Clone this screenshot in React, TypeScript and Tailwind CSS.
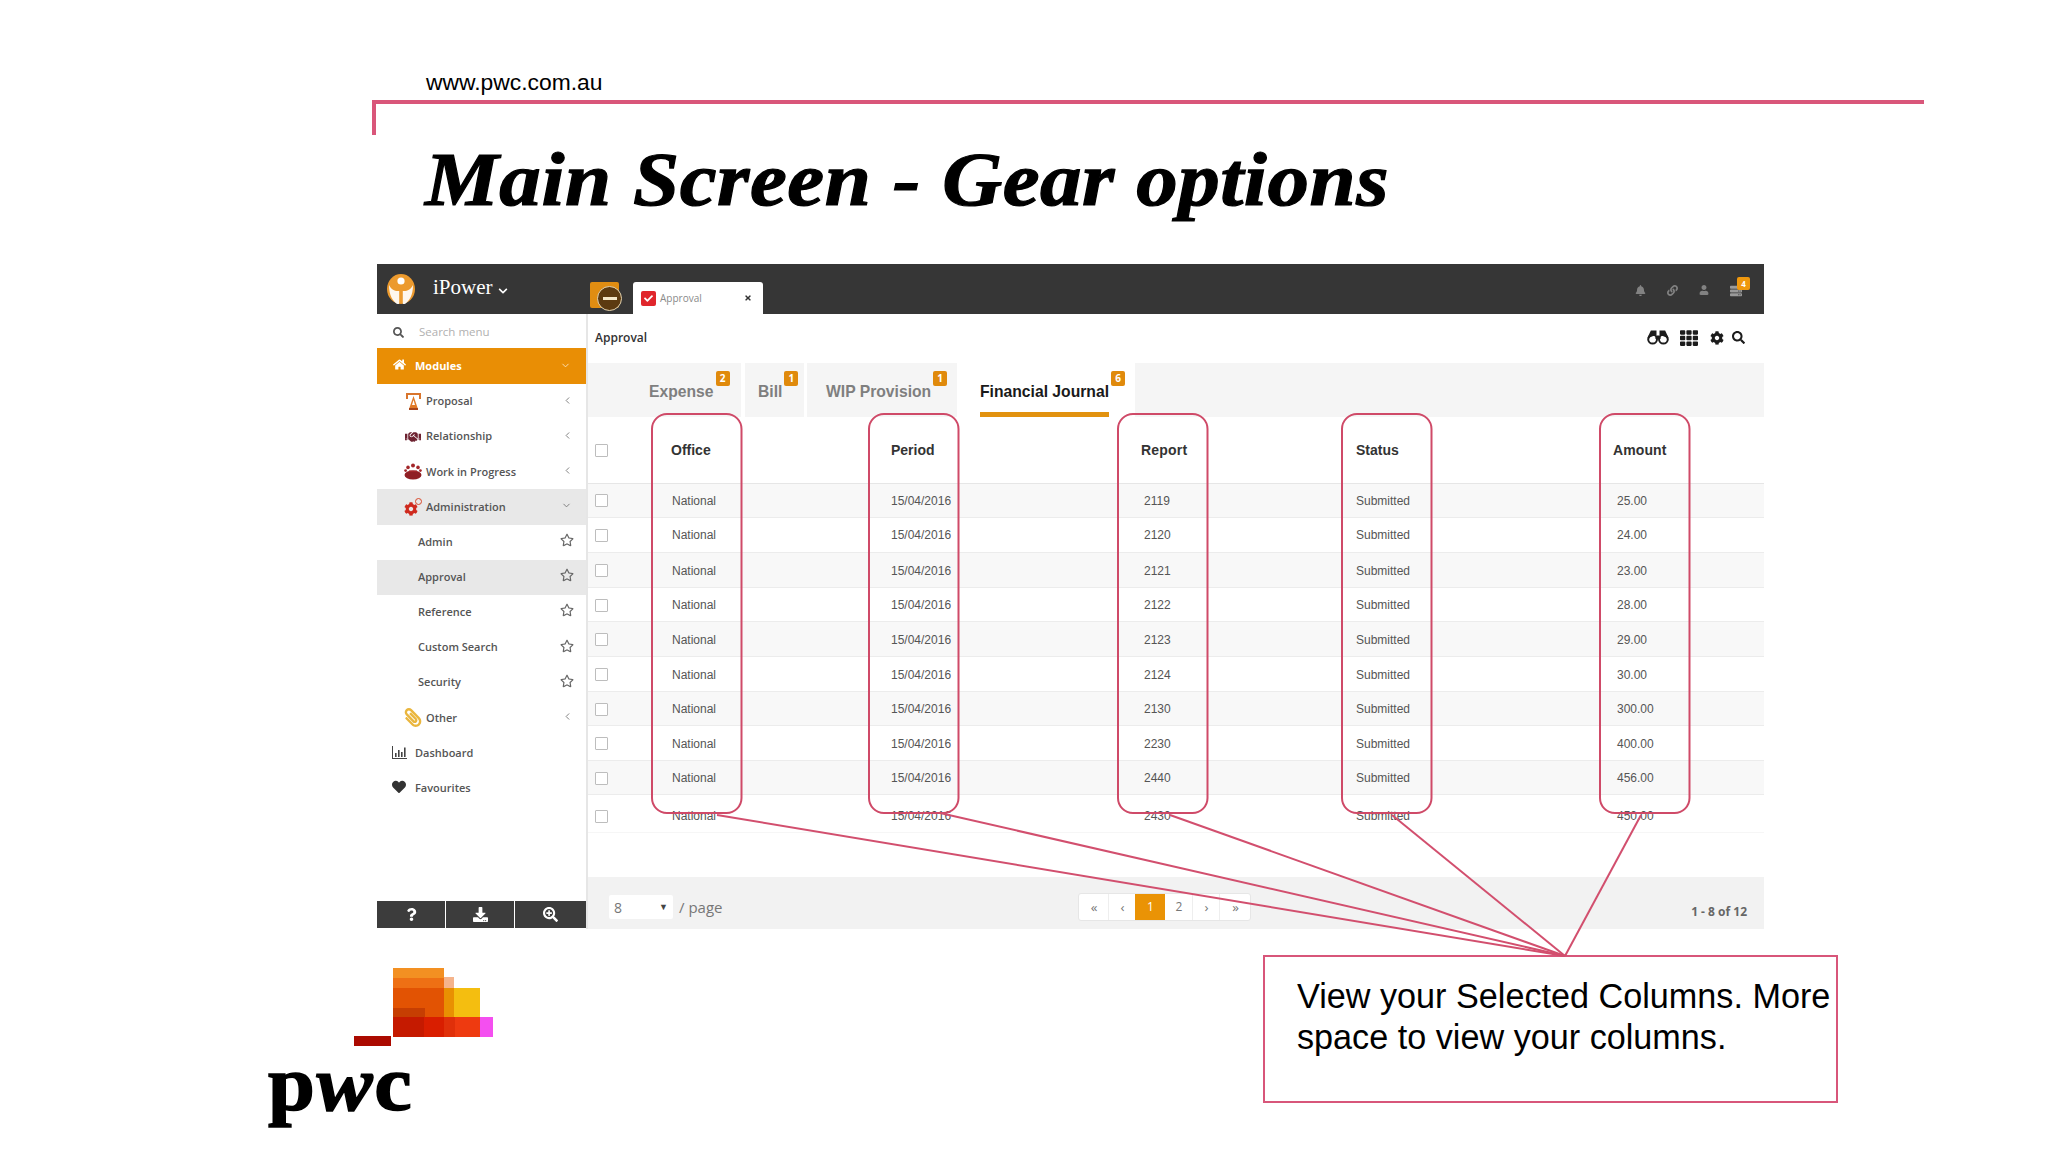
import React from "react";
import {
  FaHome, FaSearch, FaHeart, FaQuestion, FaDownload, FaSearchPlus, FaBell, FaLink, FaUser,
  FaTh, FaCog, FaCheck, FaTimes, FaRegStar, FaPaperclip,
  FaHandshake, FaServer, FaChevronDown,
} from "react-icons/fa";
import { FiChevronLeft, FiChevronDown } from "react-icons/fi";

const rows = [
  { h: "h-[34px]", bg: "bg-[#f8f8f8] border-[#ececec]", r: "2119", a: "25.00" },
  { h: "h-[35px]", bg: "bg-white border-[#ececec]", r: "2120", a: "24.00" },
  { h: "h-[35px] pt-[1px]", bg: "bg-[#f8f8f8] border-[#ececec]", r: "2121", a: "23.00" },
  { h: "h-[34px] pt-[1px]", bg: "bg-white border-[#ececec]", r: "2122", a: "28.00" },
  { h: "h-[35px] pt-[1px]", bg: "bg-[#f8f8f8] border-[#ececec]", r: "2123", a: "29.00" },
  { h: "h-[35px] pt-[1px]", bg: "bg-white border-[#ececec]", r: "2124", a: "30.00" },
  { h: "h-[34px] pt-[1px]", bg: "bg-[#f8f8f8] border-[#ececec]", r: "2130", a: "300.00" },
  { h: "h-[35px] pt-[1px]", bg: "bg-white border-[#ececec]", r: "2230", a: "400.00" },
  { h: "h-[34px] pt-[1px]", bg: "bg-[#f8f8f8] border-[#ececec]", r: "2440", a: "456.00" },
  { h: "h-[38px] pt-[5px]", bg: "bg-white border-[#f6f6f6]", r: "2430", a: "450.00" },
];

const gridCols = "grid grid-cols-[83px_220px_249px_216px_257px_151px] items-center";

function Check() {
  return <span className="block w-[13px] h-[13px] ml-[7px] border border-[#bdbdbd] bg-white rounded-[1px]" />;
}

function Badge({ n }: { n: string }) {
  return (
    <span className="mt-[8px] ml-[2px] w-[14px] h-[15px] rounded-[2px] bg-[#e08a0c] text-white text-[10px] leading-[15px] text-center font-['Open_Sans'] font-bold">
      {n}
    </span>
  );
}

function ProposalIcon() {
  return (
    <svg width="15" height="17" viewBox="0 0 15 17">
      <path d="M0 0h15v6h-2V2H2v4H0z" fill="#d9752c" />
      <path d="M7.5 3 L12 16 H3 Z" fill="#e27a26" />
      <path d="M7.5 7 L9 12 H6 Z" fill="#fff" />
      <rect x="3" y="15" width="9" height="2" fill="#a8441a" />
    </svg>
  );
}

function WorkIcon() {
  return (
    <svg width="18" height="17" viewBox="0 0 18 17">
      <ellipse cx="9" cy="12" rx="8.5" ry="4.6" fill="#8f1f24" />
      <circle cx="9" cy="2.6" r="2" fill="#a3262a" />
      <circle cx="4" cy="4.4" r="1.8" fill="#a3262a" />
      <circle cx="14" cy="4.4" r="1.8" fill="#a3262a" />
      <circle cx="1.6" cy="7.6" r="1.4" fill="#a3262a" />
      <circle cx="16.4" cy="7.6" r="1.4" fill="#a3262a" />
      <path d="M5 7.5h8v1.5H5z" fill="#a3262a" />
    </svg>
  );
}

function AdminIcon() {
  return (
    <span className="relative flex w-[18px] h-[18px] items-end">
      <FaCog className="text-[#cf2a1e] text-[14px]" />
      <span className="absolute right-[0px] top-[0px] w-[7px] h-[7px] rounded-full border-[1.5px] border-[#d8482a]" />
    </span>
  );
}

function BarsIcon() {
  return (
    <svg width="15" height="13" viewBox="0 0 15 13" fill="#444">
      <rect x="0" y="0" width="1" height="13" />
      <rect x="0" y="12" width="15" height="1" />
      <rect x="3" y="7" width="1.6" height="4" />
      <rect x="6" y="4" width="1.6" height="7" />
      <rect x="9" y="6" width="1.6" height="5" />
      <rect x="12" y="1.5" width="1.6" height="9.5" />
    </svg>
  );
}

function BinocularsIcon() {
  return (
    <svg width="22" height="15" viewBox="0 0 22 15" fill="none">
      <circle cx="5.6" cy="9.2" r="4.4" stroke="#1c1c1c" strokeWidth="2" />
      <circle cx="16.4" cy="9.2" r="4.4" stroke="#1c1c1c" strokeWidth="2" />
      <path d="M1.5 8 L4.5 1.5 H8.5 V5 M20.5 8 L17.5 1.5 H13.5 V5" stroke="#1c1c1c" strokeWidth="2" fill="#1c1c1c" />
      <rect x="8.5" y="5.5" width="5" height="3.5" fill="#1c1c1c" />
    </svg>
  );
}

function LogoMark() {
  return (
    <svg width="28" height="30" viewBox="0 0 28 30">
      <ellipse cx="14" cy="15" rx="14" ry="15" fill="#ec9a2e" />
      <circle cx="14" cy="7" r="3.6" fill="#fff" />
      <path d="M2 11 C5 17 9 17 12.2 17 V30 H10 C6 27 2 22 2 11Z" fill="#fff" opacity="0.92" />
      <path d="M26 11 C23 17 19 17 15.8 17 V30 H18 C22 27 26 22 26 11Z" fill="#fff" opacity="0.92" />
      <path d="M5 12 C8 15 11 15 14 15 C17 15 20 15 23 12" stroke="#ec9a2e" strokeWidth="2" fill="none" />
    </svg>
  );
}

type Item = {
  label: string;
  kind: "top" | "sub" | "child";
  icon?: React.ReactNode;
  right?: "left" | "down" | "star";
  active?: boolean;
};

const menu: Item[] = [
  { label: "Proposal", kind: "sub", icon: <ProposalIcon />, right: "left" },
  { label: "Relationship", kind: "sub", icon: <FaHandshake className="text-[#6d2230] text-[16px]" />, right: "left" },
  { label: "Work in Progress", kind: "sub", icon: <WorkIcon />, right: "left" },
  { label: "Administration", kind: "sub", icon: <AdminIcon />, right: "down", active: true },
  { label: "Admin", kind: "child", right: "star" },
  { label: "Approval", kind: "child", right: "star", active: true },
  { label: "Reference", kind: "child", right: "star" },
  { label: "Custom Search", kind: "child", right: "star" },
  { label: "Security", kind: "child", right: "star" },
  { label: "Other", kind: "sub", icon: <FaPaperclip className="text-[#eab63e] text-[19px] -scale-x-100" />, right: "left" },
  { label: "Dashboard", kind: "top", icon: <BarsIcon /> },
  { label: "Favourites", kind: "top", icon: <FaHeart className="text-[#333] text-[14px] -mt-[3px]" /> },
];

function MenuRow({ item }: { item: Item }) {
  return (
    <div className={`flex items-center h-[35.15px] text-[11px] font-semibold text-[#555] ${item.active ? "bg-[#e8e8e8]" : ""}`}>
      {item.kind === "top" && <span className="ml-[13px] w-[18px] mr-[7px] flex justify-center">{item.icon}</span>}
      {item.kind === "sub" && <span className="ml-[27px] w-[18px] mr-[4px] flex justify-center">{item.icon}</span>}
      {item.kind === "child" && <span className="ml-[41px]" />}
      <span>{item.label}</span>
      {item.right === "left" && <FiChevronLeft className="ml-auto mr-[13px] -mt-[3px] text-[11px] text-[#777]" />}
      {item.right === "down" && <FiChevronDown className="ml-auto mr-[14px] -mt-[3px] text-[11px] text-[#777]" />}
      {item.right === "star" && <FaRegStar className="ml-auto mr-[12px] -mt-[4px] text-[14px] text-[#666]" />}
    </div>
  );
}

function Sidebar() {
  return (
    <aside className="w-[211px] h-full flex flex-col border-r-2 border-[#e6e6e6] font-['Open_Sans']">
      <div className="h-[34px] pt-[2px] flex items-center">
        <FaSearch className="ml-[16px] text-[11px] text-[#555]" />
        <span className="ml-[15px] text-[11.5px] text-[#b0b0b0]">Search menu</span>
      </div>
      <div className="h-[36px] pt-[1px] flex items-center bg-[#e98e05] text-white text-[11px] font-bold">
        <span className="ml-[13px] w-[18px] mr-[7px] flex justify-center"><FaHome className="text-[13px] -mt-[4px]" /></span>
        <span>Modules</span>
        <FiChevronDown className="ml-auto mr-[15px] text-[11px] -mt-[2px] text-[#fbe3bf]" />
      </div>
      {menu.map((m) => <MenuRow key={m.label} item={m} />)}
      <div className="mt-auto mb-[1px] h-[27px] flex gap-px text-white">
        <span className="w-[68px] bg-[#3c3c3c] flex items-center justify-center"><FaQuestion className="text-[13px]" /></span>
        <span className="w-[68px] bg-[#3c3c3c] flex items-center justify-center"><FaDownload className="text-[15px]" /></span>
        <span className="w-[71px] bg-[#3c3c3c] flex items-center justify-center"><FaSearchPlus className="text-[15px]" /></span>
      </div>
    </aside>
  );
}

function TopBar() {
  return (
    <header className="h-[50px] bg-[#363636] flex items-center shrink-0">
      <div className="w-[213px] flex items-center">
        <span className="ml-[10px] flex"><LogoMark /></span>
        <span className="ml-[18px] -mt-[2px] text-white text-[21px] font-['Liberation_Serif']">iPower</span>
        <FaChevronDown className="ml-[5px] mt-[4px] text-white text-[10px]" />
      </div>
      <div className="self-start mt-[18px] w-[29px] h-[26px] bg-[#e08d12] rounded-[2px] relative">
        <span className="absolute left-[7px] top-[4px] w-[25px] h-[25px] rounded-full bg-[#5c3a10] border border-[#e3d3b0] flex items-center justify-center">
          <span className="w-[14px] h-[3px] bg-[#f3e6c8]" />
        </span>
      </div>
      <div className="self-end ml-[14px] w-[130px] h-[32px] bg-white rounded-t-[3px] flex items-center font-['Open_Sans']">
        <span className="ml-[8px] w-[15px] h-[15px] rounded-[2px] bg-[#e0262c] flex items-center justify-center">
          <FaCheck className="text-white text-[9px]" />
        </span>
        <span className="ml-[4px] text-[10px] text-[#8a8a8a]">Approval</span>
        <FaTimes className="ml-auto mr-[11px] text-[#333] text-[8px]" />
      </div>
      <div className="ml-auto pr-[12px] mt-[4px] flex text-[#828282]">
        <span className="w-[32px] flex justify-center"><FaBell className="text-[11px]" /></span>
        <span className="w-[32px] flex justify-center"><FaLink className="text-[11px]" /></span>
        <span className="w-[32px] flex justify-center"><FaUser className="text-[10px]" /></span>
        <span className="w-[32px] flex justify-center relative">
          <FaServer className="text-[12px] text-[#9a9a9a]" />
          <span className="absolute left-[17px] -top-[8px] w-[13px] h-[13px] rounded-[2px] bg-[#ef980e] text-white text-[8px] leading-[13px] text-center font-bold font-['Open_Sans']">4</span>
        </span>
      </div>
    </header>
  );
}

function Tabs() {
  return (
    <div className="h-[54px] flex bg-white font-['Liberation_Sans'] text-[15.7px] font-bold text-[#7f7f7f] leading-[20px] shrink-0">
      <div className="w-[153px] bg-[#f5f5f5] flex items-start pl-[61px]">
        <span className="mt-[19px]">Expense</span><Badge n="2" />
      </div>
      <div className="ml-[4px] w-[59px] bg-[#f5f5f5] flex items-start pl-[13px]">
        <span className="mt-[19px]">Bill</span><Badge n="1" />
      </div>
      <div className="ml-[3px] w-[150px] bg-[#f5f5f5] flex items-start pl-[19px]">
        <span className="mt-[19px]">WIP Provision</span><Badge n="1" />
      </div>
      <div className="w-[178px] bg-white flex items-start pl-[23px] text-[#1a1a1a]">
        <span className="h-[54px] pt-[19px] border-b-[5px] border-[#e2920f]">Financial Journal</span><Badge n="6" />
      </div>
      <div className="flex-1 bg-[#f5f5f5]" />
    </div>
  );
}

function Table() {
  return (
    <div className="font-['Liberation_Sans'] text-[12px] text-[#555]">
      <div className={`${gridCols} h-[67px] border-b border-[#e6e6e6] text-[14px] font-bold text-[#333]`}>
        <Check />
        <span>Office</span>
        <span>Period</span>
        <span className="pl-[1px] tracking-[0.2px]">Report</span>
        <span>Status</span>
        <span className="tracking-[0.1px]">Amount</span>
      </div>
      {rows.map((r) => (
        <div key={r.r} className={`${gridCols} ${r.h} ${r.bg} border-b`}>
          <Check />
          <span className="pl-[1px]">National</span>
          <span>15/04/2016</span>
          <span className="pl-[4px]">{r.r}</span>
          <span>Submitted</span>
          <span className="pl-[4px]">{r.a}</span>
        </div>
      ))}
    </div>
  );
}

function Footer() {
  return (
    <div className="mt-auto h-[52px] pt-[8px] bg-[#f2f2f2] flex items-center font-['Open_Sans'] text-[#777] shrink-0">
      <span className="ml-[21px] w-[64px] h-[24px] bg-white rounded-[2px] flex items-center px-[5px] text-[14px]">
        8<span className="ml-auto text-[9px] text-[#444]">▼</span>
      </span>
      <span className="ml-[6px] text-[15px]">/ page</span>
      <div className="ml-[356px] h-[28px] flex items-stretch bg-white border border-[#e6e6e6] rounded-[3px] text-[13.5px] text-[#777]">
        <span className="w-[30px] flex items-center justify-center border-r border-[#eee]">«</span>
        <span className="w-[26px] flex items-center justify-center">‹</span>
        <span className="w-[30px] flex items-center justify-center bg-[#ea9305] text-white text-[12px]">1</span>
        <span className="w-[28px] flex items-center justify-center border-r border-[#eee] text-[12px]">2</span>
        <span className="w-[27px] flex items-center justify-center border-r border-[#eee]">›</span>
        <span className="w-[30px] flex items-center justify-center">»</span>
      </div>
      <span className="ml-auto mr-[17px] mt-[10px] text-[12px] font-bold text-[#666]">1 - 8 of 12</span>
    </div>
  );
}

function AppWindow() {
  return (
    <section className="ml-[377px] w-[1387px] h-[665px] flex flex-col">
      <TopBar />
      <div className="flex-1 flex min-h-0">
        <Sidebar />
        <main className="flex-1 flex flex-col min-w-0">
          <div className="h-[49px] pb-[2px] flex items-center pl-[7px] pr-[19px] shrink-0">
            <span className="font-['Open_Sans'] text-[12px] font-semibold text-[#333]">Approval</span>
            <span className="ml-auto flex items-center text-[#1c1c1c]">
              <BinocularsIcon />
              <FaTh className="ml-[11px] text-[18px]" />
              <FaCog className="ml-[12px] text-[14px]" />
              <FaSearch className="ml-[8px] text-[13px]" />
            </span>
          </div>
          <Tabs />
          <Table />
          <Footer />
        </main>
      </div>
    </section>
  );
}

function PwcLogo() {
  return (
    <div className="ml-[268px] mt-[39px] w-[225px] flex flex-col">
      <svg className="ml-[86px]" width="139" height="78" viewBox="354 968 139 78">
        <rect x="393" y="968" width="51" height="10" fill="#f39022" />
        <rect x="393" y="978" width="51" height="10" fill="#ee7014" />
        <rect x="444" y="977" width="10" height="11" fill="#f5b48c" />
        <rect x="393" y="988" width="51" height="29" fill="#e25303" />
        <rect x="393" y="1008" width="32" height="9" fill="#c63e02" />
        <rect x="444" y="988" width="10" height="29" fill="#e99002" />
        <rect x="454" y="988" width="26" height="29" fill="#f4be10" />
        <rect x="393" y="1017" width="31" height="20" fill="#c51a00" />
        <rect x="424" y="1017" width="20" height="20" fill="#d91e00" />
        <rect x="444" y="1017" width="11" height="20" fill="#e0300a" />
        <rect x="455" y="1017" width="25" height="20" fill="#ee3a10" />
        <rect x="480" y="1017" width="13" height="20" fill="#f44ff0" />
        <rect x="354" y="1036" width="37" height="10" fill="#ab0a00" />
      </svg>
      <span className="mt-[2px] inline-block w-max origin-left scale-x-[1.08] font-['Liberation_Serif'] font-bold text-[78px] leading-[72px] tracking-[1.5px] text-black [-webkit-text-stroke:1.5px_black]">
        p<i>w</i>c
      </span>
    </div>
  );
}

function Callout() {
  return (
    <div className="ml-[770px] mt-[26px] w-[575px] h-[148px] border-2 border-[#d8567a] pl-[32px] pt-[19px] font-['Liberation_Sans'] text-[34.2px] leading-[41px] text-black">
      <div className="whitespace-nowrap">View your Selected Columns. More</div>
      <div className="whitespace-nowrap">space to view your columns.</div>
    </div>
  );
}

function Annotations() {
  const boxes = [652, 869, 1118, 1342, 1600];
  const starts: [number, number][] = [[717, 815], [940, 813], [1170, 815], [1392, 815], [1641, 815]];
  return (
    <svg className="absolute inset-0 pointer-events-none" width="2048" height="1152" viewBox="0 0 2048 1152">
      {boxes.map((x) => (
        <rect key={x} x={x} y="414" width="89.5" height="399" rx="15" fill="none" stroke="#cf4a68" strokeWidth="2" />
      ))}
      {starts.map(([x, y]) => (
        <line key={x} x1={x} y1={y} x2="1565" y2="956" stroke="#d24f6e" strokeWidth="2" />
      ))}
    </svg>
  );
}

export default function App() {
  return (
    <div className="relative w-[2048px] h-[1152px] bg-white overflow-hidden">
      <div className="pt-[67px] pl-[426px] h-[98px] font-['Liberation_Sans'] text-[22.85px] leading-[30px] text-black">www.pwc.com.au</div>
      <div className="mt-[2px] ml-[372px] w-[1552px] h-[35px] border-t-4 border-l-4 border-[#d9567a]" />
      <div className="h-[129px] pl-[425px] pt-[2px]">
        <h1 className="w-max origin-left scale-x-[1.092] font-['Liberation_Serif'] font-bold italic text-[76px] leading-[84px] tracking-[0.5px] text-black [-webkit-text-stroke:1.2px_black]">Main Screen - Gear options</h1>
      </div>
      <AppWindow />
      <div className="flex">
        <PwcLogo />
        <Callout />
      </div>
      <Annotations />
    </div>
  );
}
